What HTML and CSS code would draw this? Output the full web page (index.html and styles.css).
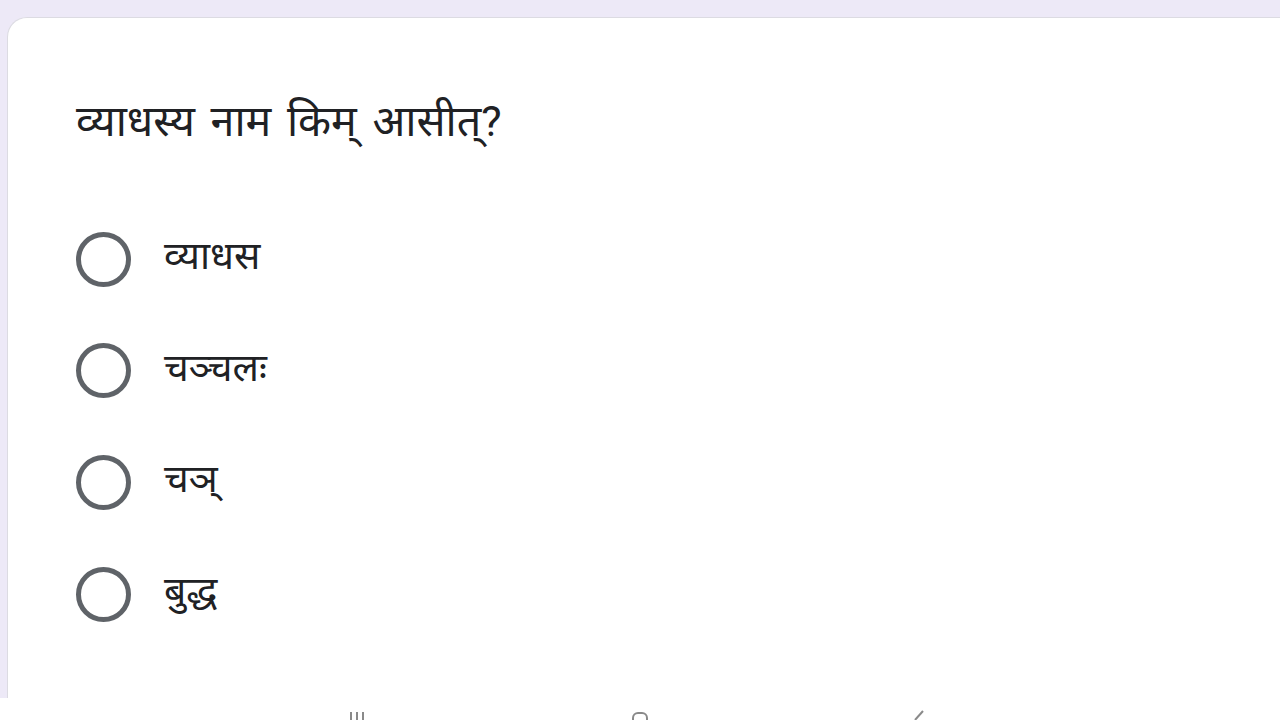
FILE: index.html
```html
<!DOCTYPE html>
<html lang="sa">
<head>
<meta charset="utf-8">
<link rel="stylesheet" href="styles.css">
</head>
<body>
<div class="screen">
  <div class="card">
    <div class="question">व्याधस्य नाम किम् आसीत्?</div>
    <div class="options">
      <div class="option"><span class="radio"></span><span class="label">व्याधस</span></div>
      <div class="option"><span class="radio"></span><span class="label">चञ्चलः</span></div>
      <div class="option"><span class="radio"></span><span class="label">चञ्</span></div>
      <div class="option"><span class="radio"></span><span class="label">बुद्ध</span></div>
    </div>
  </div>
</div>
<div class="navbar">
  <svg class="nav-icon recents" width="18" height="10" viewBox="0 0 18 10"><path d="M3 2v10M9 2v10M15 2v10" stroke="#8a8a8a" stroke-width="2" fill="none"/></svg>
  <svg class="nav-icon home" width="18" height="10" viewBox="0 0 18 10"><rect x="2" y="3" width="14" height="14" rx="5" stroke="#8a8a8a" stroke-width="2" fill="none"/></svg>
  <svg class="nav-icon back" width="18" height="10" viewBox="0 0 18 10"><path d="M12 1 L4 10" stroke="#8a8a8a" stroke-width="2" fill="none"/></svg>
</div>
</body>
</html>
```
FILE: styles.css
```css
html, body {
  margin: 0;
  padding: 0;
}
body {
  width: 1280px;
  height: 720px;
  overflow: hidden;
  background: #ffffff;
  font-family: Roboto, "Noto Sans Devanagari", "Noto Sans", sans-serif;
  color: #202124;
}
.screen {
  height: 698px;
  background: #ede9f7;
  padding: 17px 0 0 7px;
  box-sizing: border-box;
  overflow: hidden;
}
.card {
  background: #ffffff;
  border: 1px solid #dcdbe2;
  border-right: none;
  border-radius: 20px 0 0 0;
  height: 720px;
  padding: 73px 0 0 68px;
  box-sizing: border-box;
}
.question {
  font-size: 43px;
  line-height: 60px;
  word-spacing: 5px;
  color: #202124;
}
.options {
  display: flex;
  flex-direction: column;
  margin-top: 80px;
  gap: 55.7px;
}
.option {
  display: flex;
  align-items: center;
  height: 56px;
}
.radio {
  width: 45px;
  height: 45px;
  border: 5px solid #5f6368;
  border-radius: 50%;
  flex: none;
}
.label {
  margin-left: 33px;
  font-size: 39px;
  color: #202124;
}
.navbar {
  height: 22px;
  position: relative;
  background: #fff;
}
.nav-icon {
  position: absolute;
  top: 12px;
}
.recents { left: 348px; }
.home { left: 631px; }
.back { left: 911px; }
```
